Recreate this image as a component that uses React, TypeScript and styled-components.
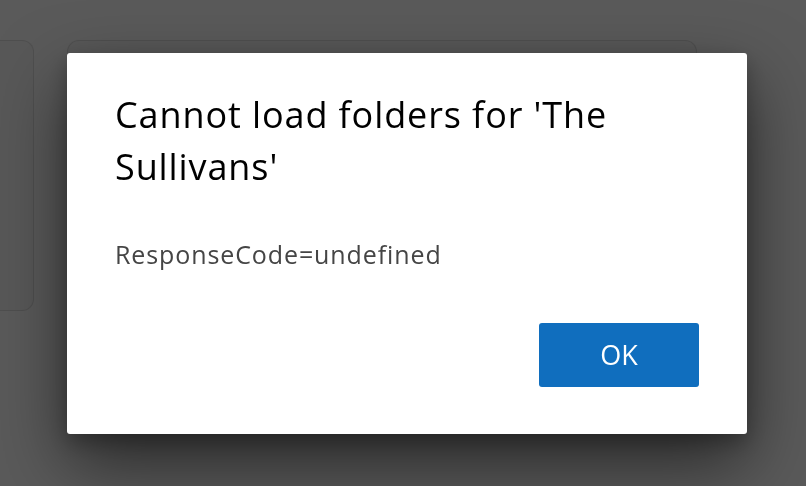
import React from 'react'
import styled, { createGlobalStyle } from 'styled-components'

const GlobalStyle = createGlobalStyle`
  html, body {
    margin: 0;
    padding: 0;
    width: 100%;
    height: 100%;
    overflow: hidden;
    background: #5a5a5a;
  }
  #root {
    height: 100%;
  }
`

const AppWrapper = styled.div`
  height: 100%;
  background: #5a5a5a;
  font-family: 'Open Sans', 'Noto Sans', sans-serif;
`

const CardRow = styled.div`
  display: grid;
  grid-template-columns: 34px 630px;
  column-gap: 33px;
  padding-top: 40px;
`

const BackCard = styled.div<{ $height: number; $cut?: boolean }>`
  height: ${({ $height }) => $height}px;
  background: #585858;
  border: 1px solid rgba(0, 0, 0, 0.1);
  border-radius: ${({ $cut }) => ($cut ? '0 12px 12px 0' : '12px')};
  border-left-width: ${({ $cut }) => ($cut ? 0 : 1)}px;
  box-sizing: border-box;
`

const Overlay = styled.div`
  position: fixed;
  inset: 0;
  display: flex;
  align-items: center;
  justify-content: center;
  padding-left: 8px;
`

const Dialog = styled.div`
  width: 680px;
  height: 381px;
  box-sizing: border-box;
  background: #ffffff;
  border-radius: 3px;
  box-shadow: 0 30px 70px rgba(0, 0, 0, 0.55), 0 8px 20px rgba(0, 0, 0, 0.25);
  padding: 36px 48px 47px 48px;
  display: flex;
  flex-direction: column;
`

const Title = styled.h1`
  margin: 0;
  font-size: 36px;
  font-weight: 400;
  line-height: 52px;
  letter-spacing: 0.9px;
  color: #000;
  max-width: 540px;
`

const Message = styled.p`
  margin: 46px 0 0 0;
  font-size: 25px;
  line-height: 30px;
  letter-spacing: 0.9px;
  color: #454545;
`

const Footer = styled.div`
  margin-top: auto;
  display: flex;
  justify-content: flex-end;
`

const PrimaryButton = styled.button`
  width: 160px;
  height: 64px;
  border: none;
  border-radius: 3px;
  background: #106ebe;
  color: #fff;
  font-family: inherit;
  font-size: 27px;
  font-weight: 500;
  cursor: pointer;
`

export default function App() {
  return (
    <>
      <GlobalStyle />
      <AppWrapper>
        <CardRow>
          <BackCard $height={271} $cut />
          <BackCard $height={360} />
        </CardRow>
        <Overlay>
          <Dialog role="dialog">
            <Title>Cannot load folders for 'The Sullivans'</Title>
            <Message>ResponseCode=undefined</Message>
            <Footer>
              <PrimaryButton>OK</PrimaryButton>
            </Footer>
          </Dialog>
        </Overlay>
      </AppWrapper>
    </>
  )
}
